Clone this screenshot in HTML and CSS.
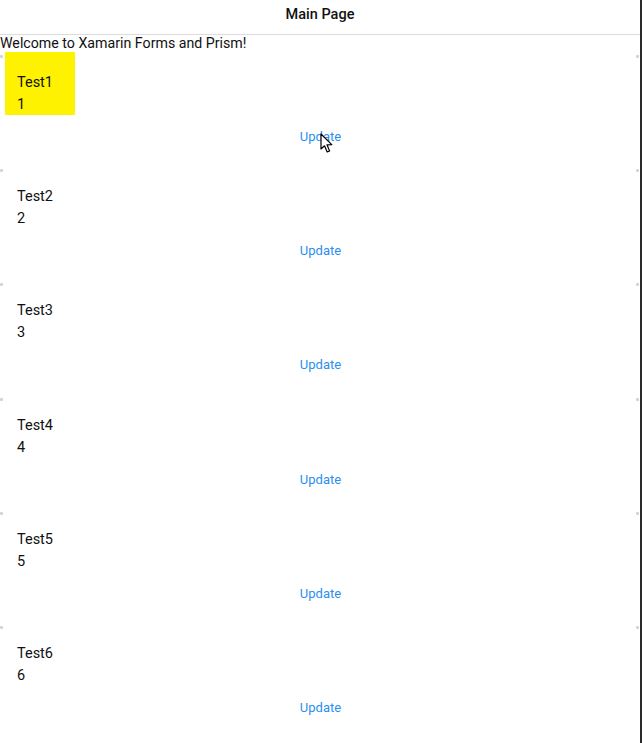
FILE: index.html
```html
<!DOCTYPE html>
<html>
<head>
<meta charset="utf-8">
<link rel="stylesheet" href="styles.css">
</head>
<body>
<div class="screen">
  <header class="nav"><span class="nav-title">Main Page</span></header>
  <div class="welcome">Welcome to Xamarin Forms and Prism!</div>
  <div class="list">
    <div class="item">
      <div class="cell highlight"><div class="name">Test1</div><div class="num">1</div></div>
      <div class="action"><span class="btn">Update</span></div>
    </div>
    <div class="item">
      <div class="cell"><div class="name">Test2</div><div class="num">2</div></div>
      <div class="action"><span class="btn">Update</span></div>
    </div>
    <div class="item">
      <div class="cell"><div class="name">Test3</div><div class="num">3</div></div>
      <div class="action"><span class="btn">Update</span></div>
    </div>
    <div class="item">
      <div class="cell"><div class="name">Test4</div><div class="num">4</div></div>
      <div class="action"><span class="btn">Update</span></div>
    </div>
    <div class="item">
      <div class="cell"><div class="name">Test5</div><div class="num">5</div></div>
      <div class="action"><span class="btn">Update</span></div>
    </div>
    <div class="item">
      <div class="cell"><div class="name">Test6</div><div class="num">6</div></div>
      <div class="action"><span class="btn">Update</span></div>
    </div>
  </div>
</div>
<svg class="cursor" width="14" height="22" viewBox="0 0 14 22">
  <path d="M1 1 L1 16 L4.5 12.8 L7.2 19 L9.6 18 L7 11.8 L11.8 11.6 Z" fill="#fff" stroke="#000" stroke-width="1.2" stroke-linejoin="round"/>
</svg>
</body>
</html>
```
FILE: styles.css
```css
html, body {
  margin: 0;
  padding: 0;
  background: #fff;
}
body {
  font-family: Roboto, "Liberation Sans", sans-serif;
  color: #111;
  width: 642px;
  height: 743px;
  overflow: hidden;
  position: relative;
}
.screen {
  width: 640px;
  height: 743px;
  border-right: 2px solid #2a2a2a;
  display: flex;
  flex-direction: column;
}
.nav {
  height: 35px;
  border-bottom: 1px solid #dcdcdc;
  display: flex;
  align-items: center;
  justify-content: center;
  flex-shrink: 0;
  box-sizing: border-box;
  padding-bottom: 6px;
}
.nav-title {
  font-size: 14.5px;
  font-weight: 500;
  color: #111;
}
.welcome {
  font-size: 14.2px;
  line-height: 17px;
  height: 17px;
}
.list {
  display: flex;
  flex-direction: column;
}
.item {
  height: 114.2px;
  position: relative;
  display: flex;
  flex-direction: column;
}
.item::before, .item::after {
  content: "";
  position: absolute;
  top: 3px;
  width: 3px;
  height: 3px;
  background: #d4d4d4;
  border-radius: 1px;
}
.item::before { left: 0; }
.item::after { right: 1px; }
.cell {
  margin-left: 5px;
  width: 70px;
  height: 63px;
  padding: 20px 0 0 12px;
  box-sizing: border-box;
  font-size: 14.5px;
  line-height: 22px;
}
.highlight {
  background: #fff200;
}
.action {
  height: 51px;
  display: flex;
  justify-content: center;
  padding-top: 13px;
  box-sizing: border-box;
}
.btn {
  font-size: 13px;
  line-height: 18px;
  color: #2a8ff0;
  padding-left: 1px;
}
.cursor {
  position: absolute;
  left: 320px;
  top: 133px;
}
```
